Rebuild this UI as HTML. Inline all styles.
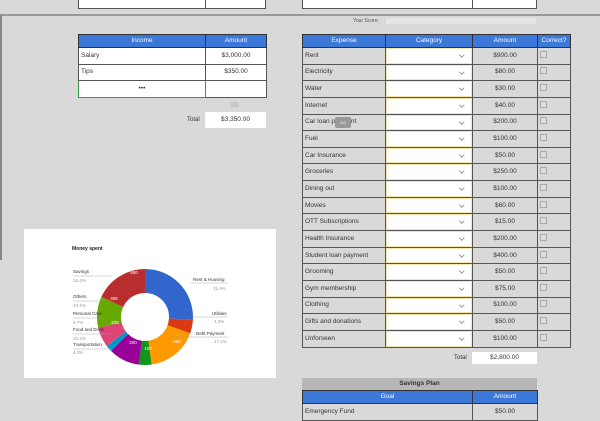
<!DOCTYPE html><html><head><style>
body{margin:0;width:600px;height:411px;overflow:hidden;background:#d9d9d9;font-family:"Liberation Sans",sans-serif;position:relative}
.a{position:absolute;box-sizing:border-box}
table{border-collapse:collapse;position:absolute;font-size:6.5px;color:#333;table-layout:fixed}
td{border:1px solid #555;padding:0 2px;height:16.65px;line-height:8px;box-sizing:border-box;white-space:nowrap;overflow:hidden;vertical-align:middle}
th{background:#3c78d8;color:#fff;font-weight:normal;height:11px;line-height:8px;padding:0;border:1px solid #333;font-size:6.5px}
.c{text-align:center}
.sel{background:#fff;border:1px solid #555;box-shadow:inset 0 0 0 1px #f3e6b0;position:relative}
.sel:after{content:"";position:absolute;right:9px;top:5px;width:2.5px;height:2.5px;border-right:1px solid #999;border-bottom:1px solid #999;transform:rotate(45deg)}
.cb{display:inline-block;width:5px;height:5px;border:1px solid #aaa;background:#ddd}
</style></head><body>
<div class="a" style="left:0;top:14px;width:600px;height:2px;background:#999"></div>
<div class="a" style="left:0;top:15px;width:2px;height:245px;background:#888"></div>
<div class="a" style="left:78px;top:0;width:188px;height:9px;background:#fff;border:1px solid #555;border-top:none"></div>
<div class="a" style="left:205px;top:0;width:1px;height:9px;background:#555"></div>
<div class="a" style="left:302px;top:0;width:235px;height:9px;background:#fff;border:1px solid #555;border-top:none"></div>
<div class="a" style="left:472px;top:0;width:1px;height:9px;background:#555"></div>
<div class="a" style="left:353px;top:18px;font-size:5px;color:#555">Your Score:</div>
<div class="a" style="left:386px;top:18px;width:150px;height:6px;background:#e6e6e6"></div>

<table style="left:78px;top:34px;width:188px">
<col style="width:127px"><col style="width:61px">
<tr><th style="height:12px">Income</th><th>Amount</th></tr>
<tr><td style="background:#fff">Salary</td><td class="c" style="background:#fff">$3,000.00</td></tr>
<tr><td style="background:#fff">Tips</td><td class="c" style="background:#fff">$350.00</td></tr>
<tr><td class="c" style="background:#fff;border:1.5px solid #3a9a3a">•••</td><td style="background:#fff"></td></tr>
</table>
<div class="a" style="left:231px;top:102px;width:8px;height:5px;background:#c8c8c8"></div>
<div class="a" style="left:187px;top:117px;font-size:6px;color:#333">Total</div>
<div class="a" style="left:205px;top:112px;width:61px;height:16px;background:#fff;font-size:6.5px;text-align:center;line-height:16px;color:#333">$3,350.00</div>

<table style="left:302px;top:34px;width:268px">
<col style="width:83px"><col style="width:87px"><col style="width:65px"><col style="width:33px">
<tr><th style="height:12px">Expense</th><th>Category</th><th>Amount</th><th>Correct?</th></tr>
<tr><td>Rent</td><td class="sel"></td><td class="c">$900.00</td><td><span class="cb"></span></td></tr>
<tr><td>Electricity</td><td class="sel"></td><td class="c">$80.00</td><td><span class="cb"></span></td></tr>
<tr><td>Water</td><td class="sel"></td><td class="c">$30.00</td><td><span class="cb"></span></td></tr>
<tr><td>Internet</td><td class="sel"></td><td class="c">$40.00</td><td><span class="cb"></span></td></tr>
<tr><td>Car loan payment</td><td class="sel"></td><td class="c">$200.00</td><td><span class="cb"></span></td></tr>
<tr><td>Fuel</td><td class="sel"></td><td class="c">$100.00</td><td><span class="cb"></span></td></tr>
<tr><td>Car Insurance</td><td class="sel"></td><td class="c">$50.00</td><td><span class="cb"></span></td></tr>
<tr><td>Groceries</td><td class="sel"></td><td class="c">$250.00</td><td><span class="cb"></span></td></tr>
<tr><td>Dining out</td><td class="sel"></td><td class="c">$100.00</td><td><span class="cb"></span></td></tr>
<tr><td>Movies</td><td class="sel"></td><td class="c">$60.00</td><td><span class="cb"></span></td></tr>
<tr><td>OTT Subscriptions</td><td class="sel"></td><td class="c">$15.00</td><td><span class="cb"></span></td></tr>
<tr><td>Health Insurance</td><td class="sel"></td><td class="c">$200.00</td><td><span class="cb"></span></td></tr>
<tr><td>Student loan payment</td><td class="sel"></td><td class="c">$400.00</td><td><span class="cb"></span></td></tr>
<tr><td>Grooming</td><td class="sel"></td><td class="c">$50.00</td><td><span class="cb"></span></td></tr>
<tr><td>Gym membership</td><td class="sel"></td><td class="c">$75.00</td><td><span class="cb"></span></td></tr>
<tr><td>Clothing</td><td class="sel"></td><td class="c">$100.00</td><td><span class="cb"></span></td></tr>
<tr><td>Gifts and donations</td><td class="sel"></td><td class="c">$50.00</td><td><span class="cb"></span></td></tr>
<tr><td>Unforseen</td><td class="sel"></td><td class="c">$100.00</td><td><span class="cb"></span></td></tr>
</table>
<div class="a" style="left:335px;top:117px;width:16px;height:11px;background:#999;border-radius:2px;font-size:4px;color:#fff;text-align:center;line-height:11px">0.0</div>
<div class="a" style="left:454px;top:355px;font-size:6px;color:#333">Total</div>
<div class="a" style="left:472px;top:352px;width:65px;height:12px;background:#fff;font-size:6.5px;text-align:center;line-height:12px;color:#333">$2,800.00</div>
<div class="a" style="left:302px;top:378px;width:235px;height:12px;background:#b7b7b7;font-size:6.5px;font-weight:bold;text-align:center;line-height:12px;color:#333">Savings Plan</div>
<table style="left:302px;top:390px;width:235px">
<col style="width:170px"><col style="width:65px">
<tr><th style="height:12px">Goal</th><th>Amount</th></tr>
<tr><td>Emergency Fund</td><td class="c">$50.00</td></tr>
</table>

<div class="a" style="left:24px;top:229px;width:252px;height:149px;background:#fff"></div>
<div class="a" style="left:72px;top:246px;font-size:5px;font-weight:bold;color:#222">Money spent</div>
<svg class="a" style="left:0;top:0" width="600" height="411">
<g transform="rotate(-90 145 317)" fill="none" stroke-width="24">
<circle cx="145" cy="317" r="36" stroke="#3366cc" stroke-dasharray="58.8 999" stroke-dashoffset="0"/>
<circle cx="145" cy="317" r="36" stroke="#dc3912" stroke-dasharray="10.2 999" stroke-dashoffset="-58.8"/>
<circle cx="145" cy="317" r="36" stroke="#ff9900" stroke-dasharray="38.9 999" stroke-dashoffset="-69"/>
<circle cx="145" cy="317" r="36" stroke="#109618" stroke-dasharray="9.7 999" stroke-dashoffset="-107.9"/>
<circle cx="145" cy="317" r="36" stroke="#990099" stroke-dasharray="23.5 999" stroke-dashoffset="-117.6"/>
<circle cx="145" cy="317" r="36" stroke="#0099c6" stroke-dasharray="5 999" stroke-dashoffset="-141.1"/>
<circle cx="145" cy="317" r="36" stroke="#dd4477" stroke-dasharray="15.2 999" stroke-dashoffset="-146.1"/>
<circle cx="145" cy="317" r="36" stroke="#66aa00" stroke-dasharray="23.5 999" stroke-dashoffset="-161.3"/>
<circle cx="145" cy="317" r="36" stroke="#b82e2e" stroke-dasharray="41.4 999" stroke-dashoffset="-184.8"/>
</g>
<g font-size="4.5" fill="#fff" font-family="Liberation Sans" text-anchor="middle">
<text x="134" y="274">550</text><text x="114" y="300">355</text><text x="115" y="324">225</text>
<text x="133" y="344">200</text><text x="148" y="350">150</text><text x="177" y="343">600</text><text x="186" y="284">900</text>
</g>
<g font-size="4.5" fill="#333" font-family="Liberation Sans">
<text x="73" y="273">Savings</text><text x="73" y="282" fill="#999">16.4%</text>
<text x="73" y="298">Others</text><text x="73" y="307" fill="#999">10.4%</text>
<text x="73" y="315">Personal Care</text><text x="73" y="324" fill="#999">6.7%</text>
<text x="73" y="331">Food and Drink</text><text x="73" y="340" fill="#999">10.4%</text>
<text x="73" y="346">Transportation</text><text x="73" y="354" fill="#999">4.3%</text>
<text x="193" y="281">Rent &amp; Housing</text><text x="213" y="290" fill="#999">25.9%</text>
<text x="212" y="315">Utilities</text><text x="214" y="323" fill="#999">4.3%</text>
<text x="196" y="335">Debt Payment</text><text x="214" y="343" fill="#999">17.2%</text>
</g>
<g stroke="#999" stroke-width="0.4">
<line x1="73" y1="276" x2="112" y2="276"/><line x1="73" y1="301" x2="104" y2="301"/><line x1="73" y1="318" x2="106" y2="318"/><line x1="73" y1="334" x2="110" y2="334"/><line x1="73" y1="349" x2="112" y2="349"/>
<line x1="190" y1="283" x2="228" y2="283"/><line x1="192" y1="317" x2="228" y2="317"/><line x1="170" y1="337" x2="228" y2="337"/>
</g>
</svg>
</body></html>
